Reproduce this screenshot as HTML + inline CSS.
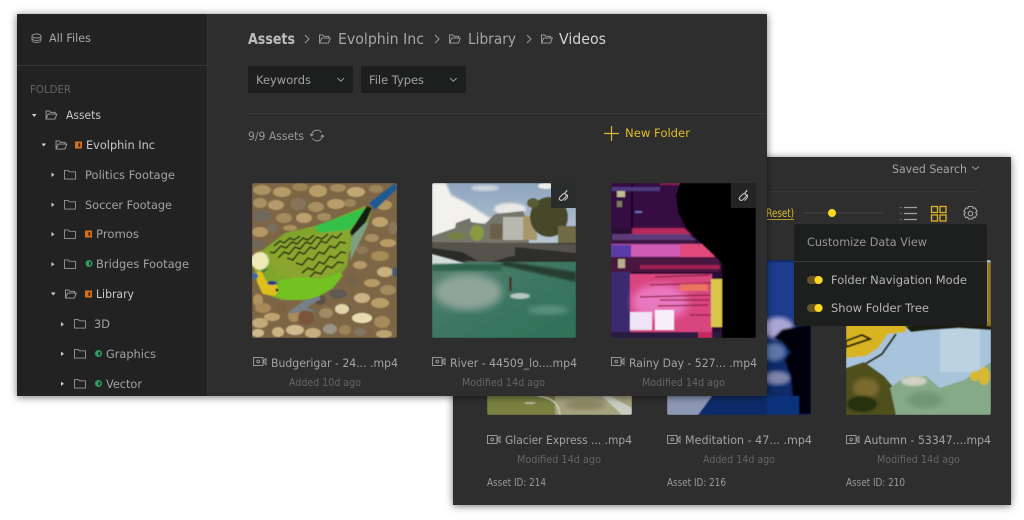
<!DOCTYPE html>
<html><head><meta charset="utf-8"><title>Assets</title>
<style>
html,body{margin:0;padding:0;background:#fff;width:1024px;height:520px;overflow:hidden}
svg{display:block}
text{font-family:"DejaVu Sans","Liberation Sans",sans-serif;font-size:11.500px;fill:#a3a3a3;white-space:pre}
.l{fill:#c9c9c9}.m{fill:#9a9a9a}.d{fill:#646565;font-size:10.500px}.y{fill:#e0bd2c}
.s{font-size:10.500px;fill:#9a9a9a}
.b{font-size:15px;fill:#a5a5a5}
.i{fill:none;stroke:#9a9a9a;stroke-width:1}
</style></head><body>
<svg xmlns="http://www.w3.org/2000/svg" width="1024" height="520" viewBox="0 0 1024 520">
<defs>
<filter id="sh" x="-5%" y="-5%" width="110%" height="110%"><feDropShadow dx="0" dy="1" stdDeviation="4" flood-color="#000" flood-opacity=".55"/></filter>
<filter id="b0"><feGaussianBlur stdDeviation=".6"/></filter>
<filter id="b1"><feGaussianBlur stdDeviation="1"/></filter>
<filter id="b2"><feGaussianBlur stdDeviation="2"/></filter>
<filter id="b4"><feGaussianBlur stdDeviation="4"/></filter>
<symbol id="fc" viewBox="0 0 13 11" overflow="visible"><path d="M.5 1h4l1.200 1.500h6.800v8h-12z" fill="none" stroke="#969696"/></symbol>
<symbol id="fo" viewBox="0 0 13 11" overflow="visible"><path d="M.5 10V1h3.500l1.200 1.500h5.300v2M.5 10h9.800l2-5.500H2.800L.5 10z" fill="none" stroke="#a2a2a2"/></symbol>
<symbol id="vid" viewBox="0 0 14 10" overflow="visible"><rect x=".5" y=".5" width="9.500" height="8" fill="none" stroke="#969696"/><circle cx="5.200" cy="4.500" r="1.400" fill="none" stroke="#969696"/><path d="M13 1.500v6L11 5.800V3.200z" fill="none" stroke="#969696"/></symbol>
<symbol id="ob" viewBox="0 0 7 7" overflow="visible"><rect width="7" height="7" fill="#d9701c"/><rect x="3.500" y="1.700" width="1.700" height="3.600" fill="#2a1b10"/></symbol>
<symbol id="gc" viewBox="0 0 8 8" overflow="visible"><circle cx="4" cy="4" r="3.500" fill="#2f9e5f"/><path d="M4 2a2 2 0 0 1 0 4z" fill="#212221"/></symbol>
<symbol id="lk" viewBox="0 0 12 14" overflow="visible"><path d="M1.500 8.500l3.500-3.500a2 2 0 0 1 2.800 2.800L4.500 11A2 2 0 0 1 1.500 8.500zM6.500 4.500l2-2.500M9 5.500a3 3 0 0 1-.5 4L6.500 11.500M8.500 1l.5 1.500" fill="none" stroke="#c6c6c6" stroke-width="1.100"/></symbol>
<clipPath id="c1"><rect x="252" y="183" width="145" height="155" rx="2"/></clipPath>
<clipPath id="c2"><rect x="432" y="183" width="144" height="155" rx="2"/></clipPath>
<clipPath id="c3"><rect x="611" y="183" width="145" height="155" rx="2"/></clipPath>
<clipPath id="c4"><rect x="487" y="260" width="145" height="155" rx="2"/></clipPath>
<clipPath id="c5"><rect x="667" y="260" width="144" height="155" rx="2"/></clipPath>
<clipPath id="c6"><rect x="846" y="260" width="145" height="155" rx="2"/></clipPath>
<linearGradient id="wat" x1="0" y1="0" x2="1" y2="1"><stop offset="0" stop-color="#55806f"/><stop offset=".5" stop-color="#3c7763"/><stop offset="1" stop-color="#2f7058"/></linearGradient>
<linearGradient id="sky" x1="0" y1="0" x2="0" y2="1"><stop offset="0" stop-color="#8ea5bf"/><stop offset="1" stop-color="#b9c6d2"/></linearGradient>
</defs>

<!-- SECOND WINDOW -->
<g filter="url(#sh)"><rect x="453" y="157" width="558" height="348" fill="#2d2f2e"/></g>
<text x="892" y="173" lengthAdjust="spacingAndGlyphs" textLength="75">Saved Search</text>
<path d="M972 166.500l3.500 3 3.500-3" class="i"/>
<path d="M768 191.500H979" stroke="#363837"/>
<text x="763" y="217" class="y" lengthAdjust="spacingAndGlyphs" textLength="31">(Reset)</text>
<path d="M765 219.500H794" stroke="#e0bd2c" stroke-width=".8"/>
<path d="M803 213H883" stroke="#3b3d3c" stroke-width="1.500"/>
<circle cx="832" cy="213" r="4" fill="#fcd91e"/>
<path d="M904 207.500H917M904 213.500H917M904 219.500H917" stroke="#a0a0a0" stroke-width="1.200"/>
<path d="M900.500 207.500h1M900.500 213.500h1M900.500 219.500h1" stroke="#a0a0a0"/>
<g fill="none" stroke="#dcb526" stroke-width="1.300"><rect x="931.500" y="206.500" width="6" height="6"/><rect x="940" y="206.500" width="6" height="6"/><rect x="931.500" y="215" width="6" height="6"/><rect x="940" y="215" width="6" height="6"/></g>
<g fill="none" stroke="#a6a6a6" stroke-width="1.100"><circle cx="970.500" cy="213.500" r="2.300"/><path d="M968.500 206.500h4l.7 1.900 1.900-.5 2 3.400-1.400 1.400 1.400 1.500-2 3.400-1.900-.5-.7 1.900h-4l-.7-1.900-1.900.5-2-3.400 1.400-1.500-1.400-1.400 2-3.400 1.900.5z"/></g>

<!-- meditation -->
<g clip-path="url(#c5)"><g filter="url(#b0)">
<rect x="667" y="260" width="144" height="155" fill="#0f2a6a"/>
<path d="M667 396h45l-14 19h-31z" fill="#8d98b5"/>
<rect x="767" y="262" width="44" height="60" fill="#1c3a8a"/>
<ellipse cx="778" cy="328" rx="16" ry="11" fill="#a9a6d4" filter="url(#b2)"/>
<ellipse cx="774" cy="352" rx="12" ry="9" fill="#5a78a8" filter="url(#b2)"/>
<ellipse cx="777" cy="378" rx="14" ry="7" fill="#7f84ac" filter="url(#b2)"/>
<path d="M782 330l29-6v90h-12l-6-16-2-22-6-16 6-8-8-10-9-4 4-4z" fill="#060608" filter="url(#b1)"/>
<rect x="767" y="396" width="32" height="19" fill="#10307c"/>
</g></g>
<!-- autumn -->
<g clip-path="url(#c6)"><g filter="url(#b0)">
<rect x="846" y="260" width="145" height="155" fill="#a8c4dc"/>
<rect x="940" y="322" width="40" height="50" fill="#bcd2e0"/>
<path d="M846 318h60v14l-18 2-10 14-12 8-20 2z" fill="#d8b422"/>
<path d="M905 318h28l-4 8-12 6-10-3z" fill="#d5b32b"/>
<path d="M905 326l40-4 46 0v8l-32-2-30 2-18 2z" fill="#1e1b10"/>
<path d="M846 341l16-6 8 4-24 8zM862 366l20-12 14-20" stroke="#1e1b10" stroke-width="2" fill="none"/>
<path d="M846 368l18-6 20 14 10 12 10 27h-58z" fill="#504f1d"/>
<path d="M890 388l16-12 20 0 14 12 24-8 12-8 15-10v53H896z" fill="#86a987"/>
<ellipse cx="866" cy="388" rx="13" ry="10" fill="#7a6a2d" filter="url(#b2)"/>
<ellipse cx="862" cy="404" rx="15" ry="8" fill="#28320d" filter="url(#b1)"/>
<ellipse cx="914" cy="381" rx="13" ry="5" fill="#cfd2c4" filter="url(#b1)"/>
<ellipse cx="984" cy="376" rx="6" ry="9" fill="#d8b830"/>
<ellipse cx="975" cy="376" rx="5" ry="5" fill="#d8b830"/>
<rect x="987" y="262" width="4" height="64" fill="#8f7a1f"/>
<ellipse cx="925" cy="400" rx="18" ry="8" fill="#6f9775" filter="url(#b2)"/>
</g></g>
<!-- glacier -->
<g clip-path="url(#c4)"><g filter="url(#b0)">
<rect x="487" y="380" width="145" height="35" fill="#79813f"/>
<rect x="555" y="380" width="77" height="35" fill="#a6a27f"/>
<path d="M610 396l22 12v7h-10l-20-19z" fill="#c8cdbf"/>
<path d="M538 396c14 2 20 6 22 19" fill="none" stroke="#cfd0c0" stroke-width="1.500"/>
<ellipse cx="530" cy="403" rx="6" ry="1" fill="#b9b99e"/>
<ellipse cx="585" cy="405" rx="20" ry="5" fill="#8b8762" filter="url(#b2)"/>
</g></g>
<!-- captions second -->
<use href="#vid" x="487" y="435" width="14" height="10"/>
<text x="505" y="444" lengthAdjust="spacingAndGlyphs" textLength="127">Glacier Express ... .mp4</text>
<text x="517" y="463" class="d" lengthAdjust="spacingAndGlyphs" textLength="84">Modified 14d ago</text>
<text x="487" y="486" class="s" lengthAdjust="spacingAndGlyphs" textLength="59">Asset ID: 214</text>
<use href="#vid" x="667" y="435" width="14" height="10"/>
<text x="685" y="444" lengthAdjust="spacingAndGlyphs" textLength="127">Meditation - 47... .mp4</text>
<text x="703" y="463" class="d" lengthAdjust="spacingAndGlyphs" textLength="72">Added 14d ago</text>
<text x="667" y="486" class="s" lengthAdjust="spacingAndGlyphs" textLength="59">Asset ID: 216</text>
<use href="#vid" x="846" y="435" width="14" height="10"/>
<text x="864" y="444" lengthAdjust="spacingAndGlyphs" textLength="127">Autumn - 53347....mp4</text>
<text x="877" y="463" class="d" lengthAdjust="spacingAndGlyphs" textLength="83">Modified 14d ago</text>
<text x="846" y="486" class="s" lengthAdjust="spacingAndGlyphs" textLength="59">Asset ID: 210</text>

<!-- popup -->
<path d="M794 227a3 3 0 0 1 3-3h187a3 3 0 0 1 3 3v96a3 3 0 0 1-3 3H797a3 3 0 0 1-3-3z" fill="#1d1e1e"/>
<path d="M794 261.500H987" stroke="#393a3a"/>
<text x="807" y="246" lengthAdjust="spacingAndGlyphs" textLength="120" style="fill:#969696">Customize Data View</text>
<rect x="807" y="276" width="16" height="8" rx="4" fill="#625425"/><circle cx="818.500" cy="280" r="4" fill="#fcd91e"/>
<text x="831" y="284" lengthAdjust="spacingAndGlyphs" textLength="136" style="fill:#b5b5b5">Folder Navigation Mode</text>
<rect x="807" y="304" width="16" height="8" rx="4" fill="#625425"/><circle cx="818.500" cy="308" r="4" fill="#fcd91e"/>
<text x="831" y="312" lengthAdjust="spacingAndGlyphs" textLength="98" style="fill:#b5b5b5">Show Folder Tree</text>

<!-- MAIN WINDOW -->
<g filter="url(#sh)"><rect x="17" y="14" width="750" height="382" fill="#2d2f2e"/></g>
<rect x="17" y="14" width="190" height="382" fill="#212221"/>
<path d="M207.500 14V396" stroke="#333534"/>
<path d="M17 65.500H207" stroke="#333534"/>
<g fill="none" stroke="#969696" stroke-width=".9"><ellipse cx="36.500" cy="36" rx="4.500" ry="2"/><path d="M32 36v4.500c0 1 2 2 4.500 2s4.500-1 4.500-2V36M32 38.500c0 1 2 2 4.500 2s4.500-1 4.500-2"/></g>
<text x="49" y="42" lengthAdjust="spacingAndGlyphs" textLength="42" style="fill:#a8a8a8">All Files</text>
<text x="30" y="93" class="d" lengthAdjust="spacingAndGlyphs" textLength="41">FOLDER</text>

<path d="M32 114h4.500l-2.250 3z" fill="#d5d5d5"/><use href="#fo" x="45" y="110" width="13" height="10"/>
<text x="66" y="119" class="l" lengthAdjust="spacingAndGlyphs" textLength="35">Assets</text>
<path d="M41.500 143.500h4.500l-2.250 3z" fill="#d5d5d5"/><use href="#fo" x="55" y="140" width="13" height="10"/><use href="#ob" x="75" y="141.500" width="7" height="7"/>
<text x="86" y="149" class="l" lengthAdjust="spacingAndGlyphs" textLength="69">Evolphin Inc</text>
<path d="M51.500 172.500v4.500l3-2.250z" fill="#c9c9c9"/><use href="#fc" x="64" y="169.500" width="12" height="10"/>
<text x="85" y="179" lengthAdjust="spacingAndGlyphs" textLength="90">Politics Footage</text>
<path d="M51.500 202.500v4.500l3-2.250z" fill="#c9c9c9"/><use href="#fc" x="64" y="199.500" width="12" height="10"/>
<text x="85" y="209" lengthAdjust="spacingAndGlyphs" textLength="87">Soccer Footage</text>
<path d="M51.500 232v4.500l3-2.250z" fill="#c9c9c9"/><use href="#fc" x="64" y="229" width="12" height="10"/><use href="#ob" x="85" y="230.500" width="7" height="7"/>
<text x="96" y="238" lengthAdjust="spacingAndGlyphs" textLength="43">Promos</text>
<path d="M51.500 262v4.500l3-2.250z" fill="#c9c9c9"/><use href="#fc" x="64" y="259" width="12" height="10"/><use href="#gc" x="85" y="259.500" width="8" height="8"/>
<text x="96" y="268" lengthAdjust="spacingAndGlyphs" textLength="93">Bridges Footage</text>
<path d="M51 292.500h4.500l-2.250 3z" fill="#d5d5d5"/><use href="#fo" x="65" y="289" width="12" height="10"/><use href="#ob" x="85" y="290.500" width="7" height="7"/>
<text x="96" y="298" class="l" lengthAdjust="spacingAndGlyphs" textLength="38">Library</text>
<path d="M61 322v4.500l3-2.250z" fill="#c9c9c9"/><use href="#fc" x="74" y="318.500" width="12" height="10"/>
<text x="94" y="328" lengthAdjust="spacingAndGlyphs" textLength="16">3D</text>
<path d="M61 351.500v4.500l3-2.250z" fill="#c9c9c9"/><use href="#fc" x="74" y="348.500" width="12" height="10"/><use href="#gc" x="94.500" y="349.500" width="8" height="8"/>
<text x="106" y="358" lengthAdjust="spacingAndGlyphs" textLength="50">Graphics</text>
<path d="M61 381.500v4.500l3-2.250z" fill="#c9c9c9"/><use href="#fc" x="74" y="378.500" width="12" height="10"/><use href="#gc" x="94.500" y="379.500" width="8" height="8"/>
<text x="106" y="388" lengthAdjust="spacingAndGlyphs" textLength="36">Vector</text>

<!-- breadcrumb -->
<text x="248" y="44" lengthAdjust="spacingAndGlyphs" textLength="47" style="font-size:15px;font-weight:bold;fill:#bdbdbd">Assets</text>
<path d="M305 35l4 4-4 4" class="i"/>
<use href="#fo" x="319" y="34" width="12" height="10"/>
<text x="338" y="44" class="b" lengthAdjust="spacingAndGlyphs" textLength="86">Evolphin Inc</text>
<path d="M435 35l4 4-4 4" class="i"/>
<use href="#fo" x="449" y="34" width="12" height="10"/>
<text x="468" y="44" class="b" lengthAdjust="spacingAndGlyphs" textLength="48">Library</text>
<path d="M527 35l4 4-4 4" class="i"/>
<use href="#fo" x="541" y="34" width="12" height="10"/>
<text x="559" y="44" lengthAdjust="spacingAndGlyphs" textLength="47" style="font-size:15px;fill:#d2d2d2">Videos</text>

<rect x="248" y="66" width="105" height="27" rx="2" fill="#1d1e1e"/>
<text x="256" y="84" lengthAdjust="spacingAndGlyphs" textLength="55">Keywords</text>
<path d="M337.500 78l3.300 3.300 3.300-3.300" class="i"/>
<rect x="361" y="66" width="105" height="27" rx="2" fill="#1d1e1e"/>
<text x="369" y="84" lengthAdjust="spacingAndGlyphs" textLength="55">File Types</text>
<path d="M450 78l3.300 3.300 3.300-3.300" class="i"/>
<path d="M248 113.500H767" stroke="#383a39"/>
<text x="248" y="140" class="m" lengthAdjust="spacingAndGlyphs" textLength="56">9/9 Assets</text>
<g fill="none" stroke="#9a9a9a"><path d="M311.500 135.500a5.500 5.500 0 0 1 10-3M322.500 135.500a5.500 5.500 0 0 1-10 3"/><path d="M310 134l1.500 2 1.800-1.800M324 137l-1.500-2-1.800 1.800"/></g>
<path d="M604 133.500H619M611.500 126V141" stroke="#dcb92c" stroke-width="1.200"/>
<text x="625" y="137" class="y" lengthAdjust="spacingAndGlyphs" textLength="65">New Folder</text>

<!-- bird -->
<g clip-path="url(#c1)"><g filter="url(#b0)">
<rect x="252" y="183" width="145" height="155" fill="#7d6645"/>
<g>
<ellipse cx="262" cy="190" rx="9" ry="5" fill="#ab9363"/><ellipse cx="282" cy="192" rx="9" ry="5" fill="#b79a6a"/><ellipse cx="300" cy="187" rx="8" ry="4" fill="#9c8458"/><ellipse cx="318" cy="191" rx="9" ry="6" fill="#b89c68"/><ellipse cx="338" cy="188" rx="8" ry="4" fill="#a48c5e"/><ellipse cx="356" cy="192" rx="9" ry="5" fill="#c2a672"/><ellipse cx="376" cy="189" rx="7" ry="4" fill="#9b8358"/>
<ellipse cx="260" cy="203" rx="7" ry="5" fill="#a99062"/><ellipse cx="276" cy="205" rx="8" ry="5" fill="#b59a6c"/><ellipse cx="298" cy="204" rx="8" ry="6" fill="#86745a"/><ellipse cx="316" cy="207" rx="8" ry="5" fill="#a88f60"/><ellipse cx="336" cy="204" rx="9" ry="5" fill="#b99e6c"/><ellipse cx="350" cy="203" rx="6" ry="4" fill="#9d855a"/>
<ellipse cx="262" cy="216" rx="9" ry="6" fill="#70685e"/><ellipse cx="284" cy="218" rx="8" ry="5" fill="#a48b5c"/><ellipse cx="304" cy="218" rx="8" ry="5" fill="#bda170"/><ellipse cx="324" cy="217" rx="7" ry="4" fill="#a58c5e"/>
<ellipse cx="260" cy="232" rx="8" ry="5" fill="#b49866"/><ellipse cx="272" cy="228" rx="5" ry="5" fill="#7a705e"/><ellipse cx="290" cy="228" rx="7" ry="3" fill="#ab9062"/>
<ellipse cx="258" cy="244" rx="6" ry="4" fill="#6e675c"/>
<ellipse cx="384" cy="205" rx="8" ry="5" fill="#b19660"/><ellipse cx="380" cy="222" rx="8" ry="5" fill="#bda26e"/><ellipse cx="393" cy="228" rx="5" ry="6" fill="#8a7658"/><ellipse cx="372" cy="238" rx="7" ry="4" fill="#a88e60"/><ellipse cx="388" cy="243" rx="8" ry="4" fill="#b89c66"/><ellipse cx="362" cy="250" rx="6" ry="4" fill="#8f7854"/><ellipse cx="380" cy="256" rx="9" ry="5" fill="#a68c5a"/><ellipse cx="360" cy="265" rx="7" ry="4" fill="#b49a68"/><ellipse cx="385" cy="272" rx="8" ry="5" fill="#c8b080"/><ellipse cx="395" cy="272" rx="3" ry="5" fill="#4a5a68"/><ellipse cx="352" cy="280" rx="7" ry="5" fill="#76624a"/><ellipse cx="372" cy="283" rx="8" ry="4" fill="#b59a66"/><ellipse cx="388" cy="290" rx="8" ry="5" fill="#a58c5e"/><ellipse cx="338" cy="294" rx="9" ry="5" fill="#5e5a54"/><ellipse cx="362" cy="298" rx="8" ry="5" fill="#c9b182"/><ellipse cx="380" cy="303" rx="9" ry="5" fill="#b99e6a"/>
<ellipse cx="320" cy="300" rx="6" ry="5" fill="#5b5046"/><ellipse cx="344" cy="308" rx="7" ry="4" fill="#5e5a55"/>
<ellipse cx="258" cy="300" rx="5" ry="6" fill="#b0935f"/><ellipse cx="263" cy="308" rx="8" ry="5" fill="#a88a58"/><ellipse cx="281" cy="308" rx="6" ry="5" fill="#7d6240"/><ellipse cx="260" cy="323" rx="8" ry="5" fill="#c3aa78"/><ellipse cx="272" cy="317" rx="8" ry="4" fill="#bfa472"/><ellipse cx="258" cy="333" rx="6" ry="4" fill="#d0b98c"/><ellipse cx="294" cy="316" rx="6" ry="6" fill="#aa8a58"/><ellipse cx="306" cy="318" rx="8" ry="7" fill="#7a543a"/><ellipse cx="326" cy="313" rx="7" ry="5" fill="#a08a66"/><ellipse cx="362" cy="318" rx="10" ry="5" fill="#ecdcb0"/><ellipse cx="362" cy="317" rx="8" ry="4" fill="#e9dbb0"/><ellipse cx="342" cy="309" rx="7" ry="5" fill="#e2d4aa"/><ellipse cx="295" cy="330" rx="9" ry="5" fill="#d1bb8e"/><ellipse cx="278" cy="332" rx="6" ry="5" fill="#cdb383"/><ellipse cx="313" cy="333" rx="8" ry="5" fill="#c4ac7e"/><ellipse cx="330" cy="329" rx="7" ry="5" fill="#9b9484"/><ellipse cx="345" cy="330" rx="6" ry="5" fill="#9d8258"/><ellipse cx="360" cy="332" rx="6" ry="4" fill="#827664"/><ellipse cx="382" cy="322" rx="8" ry="6" fill="#a68a5c"/><ellipse cx="384" cy="334" rx="8" ry="4" fill="#bca272"/>
</g>
<path d="M369 203l26-20 2 6-22 21z" fill="#1f5a92"/>
<path d="M259 253l26-20 34-8 46-19 7 2-5 18-18 27-2 13-15 20-23 14h-27l-20-7-8-20z" fill="#7fa52a"/>
<path d="M315 226l50-18-3 7-13 15-30 3z" fill="#34c04a"/>
<path d="M350 232l11-17 6-9 5 2-6 14-9 14-4 4z" fill="#171c17"/>
<path d="M352 236l14-14 2 2-6 13-12 24z" fill="#7f9f82"/>
<path d="M265 253l20-15 34-5 30-3-2 33-28 18-40-5z" fill="#8ba62f"/>
<g fill="none" stroke="#1c2413" stroke-width="1.500">
<path d="M300 236l-6 4-4-2-6 5-4-2-6 5"/>
<path d="M314 235l-6 5-5-2-6 6-5-2-6 6-5-2-7 7-4-1"/>
<path d="M328 234l-6 5-5-2-6 7-5-2-6 7-5-2-6 7-5-2-6 6"/>
<path d="M342 233l-5 5-5-2-6 7-5-2-6 8-5-2-6 7-5-2-6 8-6-2"/>
<path d="M346 243l-6-1-5 6-5-2-6 8-5-2-6 8-5-2-6 7-6-2"/>
<path d="M346 253l-5-1-6 6-5-2-6 8-5-2-6 8-5-2-6 5"/>
<path d="M344 263l-6-1-6 6-5-2-6 8-6-2-5 5"/>
</g>
<path d="M280 280l20-3 22 2 17-6 4 2-10 13-19 11-25 1-16-4z" fill="#72c222"/>
<path d="M259 266l6-12 4 4-2 12-4 3z" fill="#44702a"/>
<circle cx="260" cy="261" r="9" fill="#f0e9b8" filter="url(#b0)"/>
<path d="M257 271l5 1 4 9 10 3 3 6-4 6-12-2-6-12z" fill="#dfbf1c"/>
<circle cx="255" cy="276" r="3" fill="#3a6aa8"/>
<ellipse cx="272" cy="283" rx="5" ry="2" fill="#2c3a8a"/>
<circle cx="277" cy="290" r="1.500" fill="#111"/>
<path d="M289 312l14-11 16-5 2 3-14 8 9 5-12-2-12 4z" fill="#768088"/>
</g></g>
<!-- river -->
<g clip-path="url(#c2)"><g filter="url(#b0)">
<rect x="432" y="183" width="144" height="60" fill="url(#sky)"/>
<path d="M432 183h14l5 12 16 8 12 8 14 9-20 8-22 4-19 5z" fill="#f2f1ec" filter="url(#b1)"/>
<ellipse cx="510" cy="209" rx="16" ry="6" fill="#e8e9e6" filter="url(#b1)"/>
<ellipse cx="485" cy="188" rx="14" ry="3" fill="#ced6de" filter="url(#b1)"/>
<ellipse cx="546" cy="186" rx="8" ry="3" fill="#ecedeb"/>
<path d="M432 236l23-8 1-5 14-5 1 4 14 2 10-10 28-3 6 14v18H432z" fill="#75766a"/>
<rect x="503" y="217" width="20" height="23" fill="#b9b8b0"/>
<rect x="490" y="224" width="12" height="15" fill="#6b604a"/>
<rect x="523" y="216" width="14" height="24" fill="#a6986c"/>
<ellipse cx="477" cy="233" rx="7" ry="8" fill="#88993f"/>
<ellipse cx="456" cy="236" rx="10" ry="4" fill="#74804a"/>
<ellipse cx="549" cy="217" rx="19" ry="20" fill="#47472a"/>
<rect x="558" y="226" width="18" height="17" fill="#6f6a46"/>
<ellipse cx="533" cy="203" rx="6" ry="5" fill="#5a5a34"/>
<path d="M432 242l144 2v12H512l-20 6h-24l-24-8-12-2z" fill="#54524c"/>
<path d="M432 248l30 4 16 9-24-1-22-8z" fill="#2a2a27"/>
<path d="M515 247l61 6v21l-36-6-25-5z" fill="#2e2f2a"/>
<rect x="432" y="262" width="144" height="76" fill="url(#wat)"/>
<path d="M432 254l32 9-32 2z" fill="#d5dcdc"/>
<path d="M505 261l71 11v10l-40-9-36-8z" fill="#263c31" filter="url(#b1)"/>
<rect x="432" y="264" width="70" height="7" fill="#2f6350" filter="url(#b1)"/>
<ellipse cx="468" cy="292" rx="34" ry="18" fill="#8fa59b" filter="url(#b4)"/>
<ellipse cx="520" cy="296" rx="10" ry="3" fill="#b7c9c0" filter="url(#b0)"/>
<rect x="509" y="277" width="3" height="14" fill="#4a3a2c"/>
<ellipse cx="548" cy="310" rx="20" ry="5" fill="#578f7a" filter="url(#b2)"/>
</g>
<rect x="551" y="183" width="25" height="25" fill="#2a2c2b"/>
<use href="#lk" x="558" y="189" width="12" height="14"/>
</g>
<!-- rainy -->
<g clip-path="url(#c3)"><g filter="url(#b0)">
<rect x="611" y="183" width="145" height="155" fill="#2c0b36"/>
<rect x="611" y="183" width="70" height="45" fill="#351042"/>
<rect x="631" y="183" width="2" height="50" fill="#1a0520"/>
<path d="M612 187h48v4h-48z" fill="#4e3a80"/>
<rect x="660" y="183" width="20" height="2" fill="#8c1f48"/>
<rect x="617" y="191" width="8" height="6" fill="#c0bd8e"/><rect x="617" y="201" width="5" height="6" fill="#7f7a5c"/>
<rect x="635" y="211" width="7" height="2" fill="#6a6ab0"/>
<path d="M632 228h52l8 7h-60z" fill="#b92a5c" filter="url(#b0)"/>
<path d="M612 234h76l8 6H612z" fill="#5c3a78"/>
<rect x="611" y="240" width="84" height="4" fill="#3a1240"/>
<rect x="611" y="244" width="100" height="13" fill="#d05cb6" filter="url(#b0)"/>
<rect x="611" y="245" width="20" height="12" fill="#5a3aa8"/>
<path d="M680 244h25l10 13h-35z" fill="#e0487c"/>
<rect x="611" y="257" width="108" height="15" fill="#4a1240"/>
<rect x="618" y="259" width="7" height="9" fill="#b6b18c"/>
<path d="M640 265h80v4h-80z" fill="#a02050"/>
<rect x="611" y="272" width="20" height="66" fill="#3a2a70"/>
<rect x="630" y="274" width="82" height="58" fill="#d8457f"/>
<ellipse cx="660" cy="302" rx="28" ry="18" fill="#ea78c0" filter="url(#b4)"/>
<g stroke="#8e1f42" stroke-width="1.200"><path d="M655 277l55-2M650 285l62-2M640 297l70-2M660 300l50 0M658 306l50-1M690 315l22 0"/></g>
<path d="M680 284h28v7h-28z" fill="#ea7460" filter="url(#b0)"/>
<rect x="711" y="279" width="11" height="48" fill="#d8c548"/>
<rect x="630" y="312" width="22" height="18" fill="#efe3f6"/>
<rect x="655" y="310" width="19" height="20" fill="#f6eef8"/>
<rect x="611" y="332" width="110" height="6" fill="#2b1a40"/>
<rect x="698" y="332" width="14" height="6" fill="#c22a5c"/>
<path d="M680 183h76v155h-34v-75l-17-16-17-17-10-17-2-18z" fill="#000"/>
</g>
<rect x="731" y="183" width="25" height="25" fill="#232423"/>
<use href="#lk" x="738" y="189" width="12" height="14"/>
</g>
<!-- captions main -->
<use href="#vid" x="253" y="357" width="14" height="10"/>
<text x="271" y="367" lengthAdjust="spacingAndGlyphs" textLength="127">Budgerigar - 24... .mp4</text>
<text x="289" y="386" class="d" lengthAdjust="spacingAndGlyphs" textLength="72">Added 10d ago</text>
<use href="#vid" x="432" y="357" width="14" height="10"/>
<text x="450" y="367" lengthAdjust="spacingAndGlyphs" textLength="127">River - 44509_lo....mp4</text>
<text x="462" y="386" class="d" lengthAdjust="spacingAndGlyphs" textLength="83">Modified 14d ago</text>
<use href="#vid" x="611" y="357" width="14" height="10"/>
<text x="629" y="367" lengthAdjust="spacingAndGlyphs" textLength="128">Rainy Day - 527... .mp4</text>
<text x="642" y="386" class="d" lengthAdjust="spacingAndGlyphs" textLength="83">Modified 14d ago</text>
</svg>
</body></html>
